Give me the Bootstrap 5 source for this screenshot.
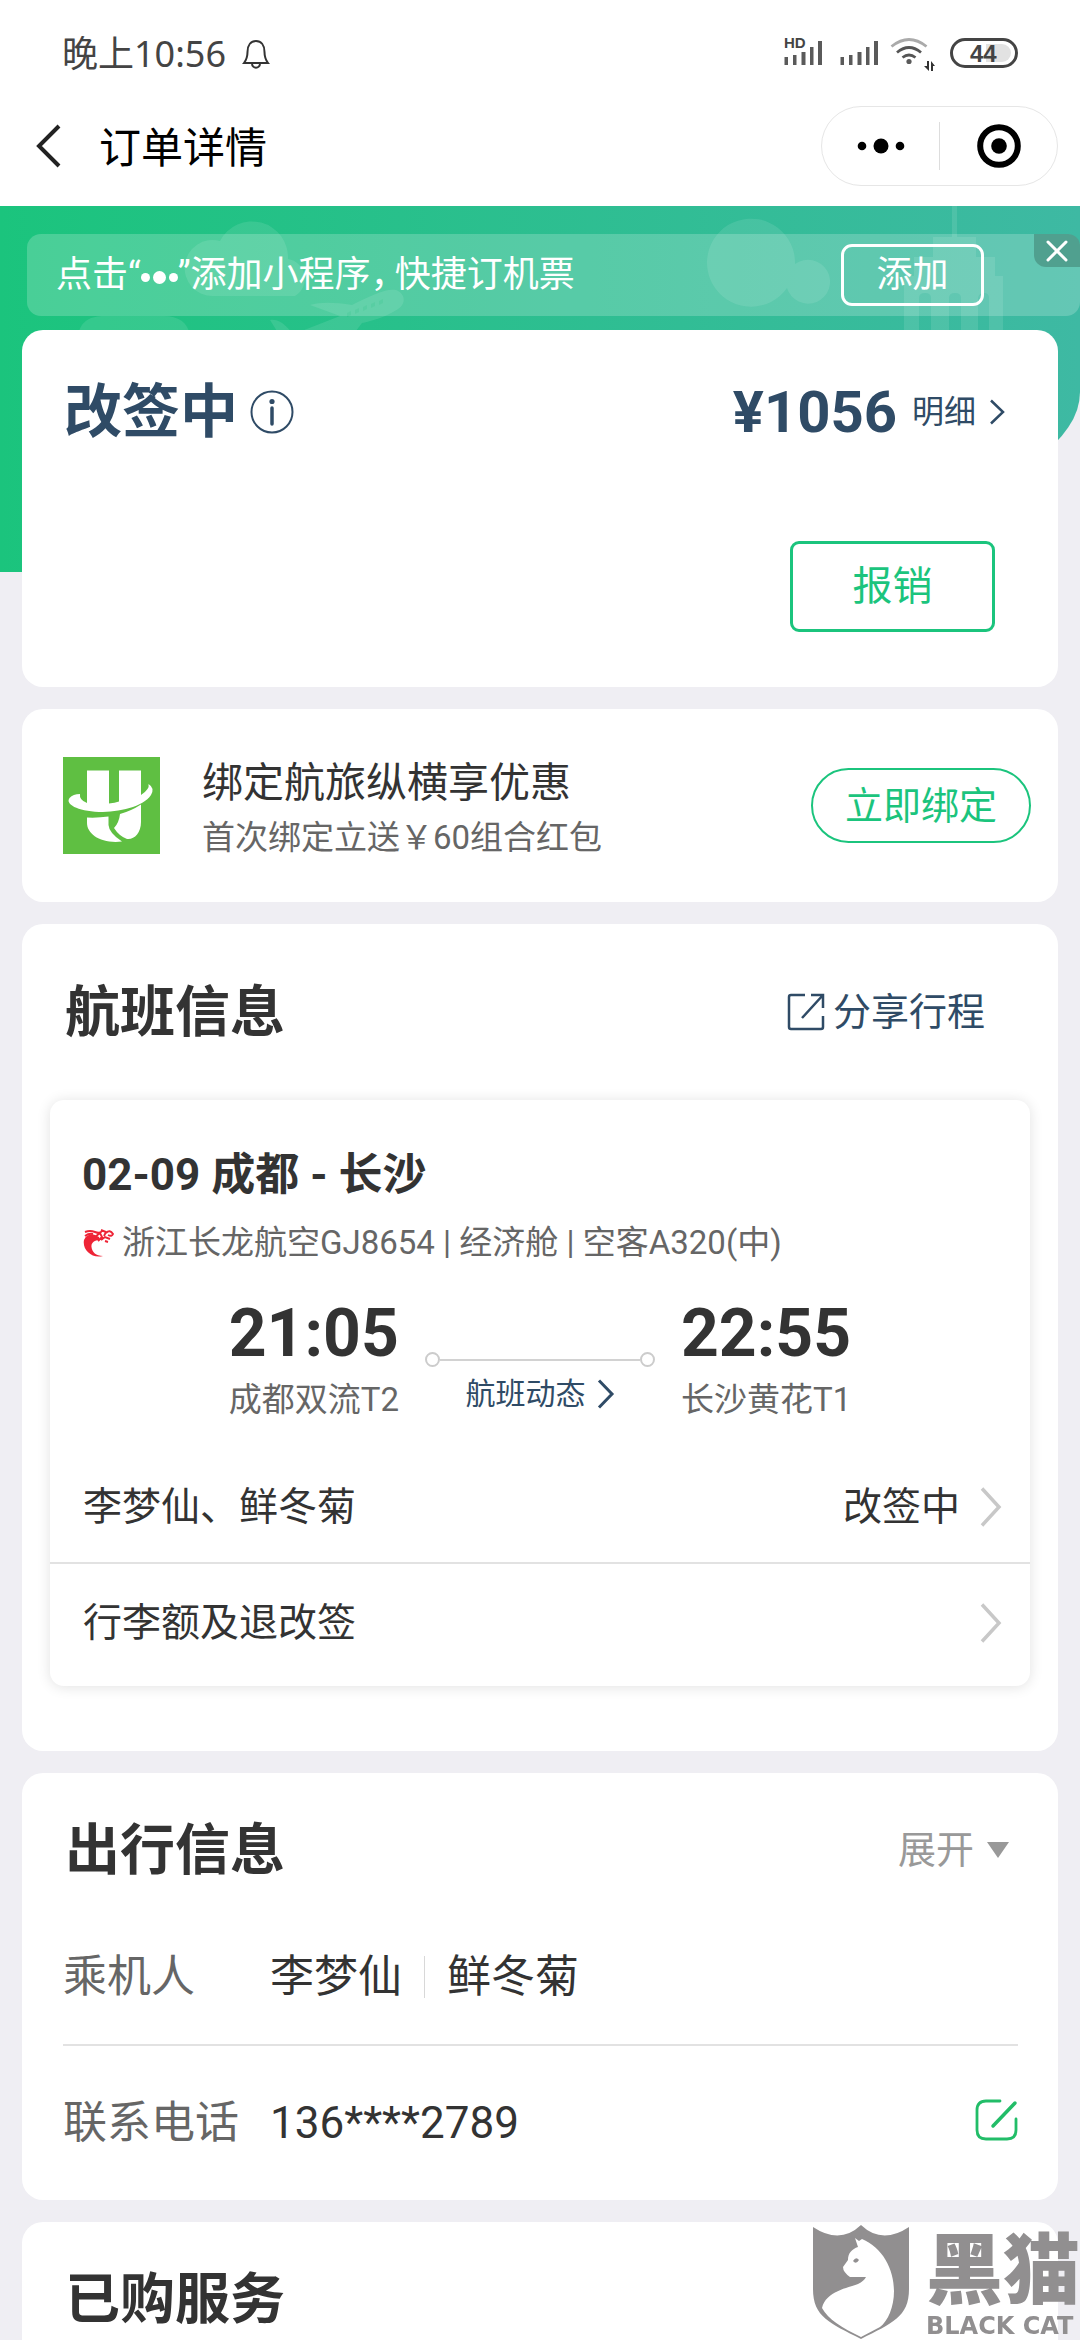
<!DOCTYPE html>
<html lang="zh-CN">
<head>
<meta charset="utf-8">
<meta name="viewport" content="width=device-width, initial-scale=1">
<title>订单详情</title>
<link href="https://cdn.jsdelivr.net/npm/bootstrap@5.3.0/dist/css/bootstrap.min.css" rel="stylesheet">
<style>
:root{--green:#1bc47d;--navy:#2f4b66;--ink:#333;--grey:#666;--soft:#999;--line:#e2e2e2}
body{background:#efeef3;color:var(--ink);font-family:Roboto,"Noto Sans CJK SC",sans-serif;overflow-x:hidden}
svg{display:block;flex:none}
.plain-btn{background:none;border:0;padding:0;color:inherit}
.statusbar{height:86px;padding:22px 62px 0;color:#444}
.clock{font:400 36px/50px "Noto Sans","Noto Sans CJK SC",sans-serif}
.titlebar{height:120px;padding:0 22px 0 34px}
.titlebar h1{font-size:42px;line-height:58px;color:#000;margin-left:37px;padding-top:6px}
.capsule{width:237px;height:80px;border:1px solid #e6e6e6;border-radius:40px}
.capsule .split{width:1px;height:48px;background:#ddd}
.capsule button{flex:1;display:flex;align-items:center;justify-content:center;height:78px}
.stage{position:relative;flex:1 0 auto}
.hero{position:absolute;inset:0 0 auto 0;height:366px;background:linear-gradient(90deg,#1bc47d,#3eb9a3);border-bottom-right-radius:600px 180px;overflow:hidden}
.content{position:relative;flex:1 0 auto}
.tip{position:relative;margin:28px 0 14px 27px;height:82px;padding:0 96px 0 29px;border-radius:14px;background:rgba(255,255,255,.2);color:#fff;font-size:36px;line-height:50px}
.tip .comma{font-feature-settings:"halt";margin-right:6px}
.tip .dots{display:inline-flex;gap:3px;align-items:center;vertical-align:middle}
.tip .dots i{width:9px;height:9px;border-radius:50%;background:#fff}
.tip .dots i:nth-child(2){width:13px;height:13px}
.tip .add-btn{width:143px;height:62px;border:3px solid #fff;border-radius:11px}
.tip .close-btn{position:absolute;top:0;right:0;width:46px;height:33px;background:#50a08f;border:0;padding:0;border-radius:0 12px 0 12px;display:flex;align-items:center;justify-content:center}
.panel{background:#fff;border-radius:21px;margin:0 22px 22px}
.panel h2{font-size:55px;line-height:70px;font-weight:700}
.navy{color:var(--navy)}
.state{height:162px;padding:2px 53px 0 42px}
.state .price{font-size:58px;line-height:70px;font-weight:700}
.state .state-name{font-size:58px}
.state .more{font-size:32px;line-height:44px;margin-left:15px;margin-right:13px}
.actions{padding:49px 63px 55px}
.claim-btn{width:205px;height:91px;border:3px solid var(--green);border-radius:9px;background:#fff;color:var(--green);font-size:40px;line-height:50px}
.bind{height:193px;padding:0 27px 0 41px}
.bind .copy{margin-left:42px;padding-top:11px}
.bind .t1{font-size:41px;line-height:54px}
.bind .t2{font-size:33px;line-height:56px;color:var(--grey)}
.bind-btn{width:220px;height:75px;border:2px solid var(--green);border-radius:38px;background:#fff;color:var(--green);font-size:38px;line-height:50px}
.flight-panel{padding-bottom:65px}
.flight-head{height:176px;padding:0 73px 0 43px}
.trip-head{height:152px;padding:2px 48px 0 43px}
.fs-38{font-size:38px;line-height:50px}
.fs-44{font-size:44px;line-height:60px}
.flight{margin:0 28px;border-radius:14px;box-shadow:0 1px 14px rgba(0,0,0,.12)}
.flight h3{font-size:44px;line-height:50px;font-weight:700;padding:50px 32px 22px}
.carrier{font-size:33px;line-height:42px;color:var(--grey);padding:0 33px;gap:8px}
.legs{gap:26px;padding-top:37px;padding-bottom:31px}
.legs .time{font-size:66px;line-height:66px;font-weight:700;margin-bottom:12px}
.legs .port{font-size:33px;line-height:42px;color:var(--grey)}
.legs .mid{width:230px;padding-top:51px}
.legs .mid a{font-size:30px;line-height:40px;margin-top:7px;gap:11px}
.track .ring{width:15px;height:15px;border:2px solid #ccc;border-radius:50%}
.track .bar{height:2px;background:#d2d2d2}
.flight-row{height:110px;padding:0 28px 0 33px;color:var(--ink);font-size:39px;line-height:50px;gap:20px}
.flight-row+.flight-row{height:124px;border-top:2px solid var(--line);padding-bottom:4px}
.trip-body{padding:0 40px 0 41px}
.info-row{height:154px}
.info-row.ruled{height:121px;padding-bottom:16px;border-bottom:2px solid var(--line)}
.info-row .key{width:207px;color:var(--grey)}
.info-row .pipe{width:1px;height:42px;background:#d8d8d8;margin:0 22px}
.info-row .edit{padding-bottom:6px}
.bought{padding:42px 43px 0}
.brandmark{position:fixed;right:0;bottom:0;color:#918f90;gap:16px}
.brandmark .cn{font:900 77px/72px "Noto Sans CJK SC",sans-serif}
.brandmark .en{font:700 24px/28px "DejaVu Sans",sans-serif;margin-top:11px}
</style>
</head>
<body>
<div class="d-flex flex-column min-vh-100">
<header class="bg-white">
  <div class="statusbar d-flex align-items-center justify-content-between">
    <div class="d-flex align-items-center">
      <span class="clock">晚上10:56</span>
      <svg class="ms-3" width="28" height="30" viewBox="0 0 28 30" fill="none" stroke="#333" stroke-width="2"><path d="M2 24H26C23 20 22.500 18 22.500 13C22.500 6 19 2 14 2S5.500 6 5.500 13C5.500 18 5 20 2 24ZM10 24.500C10 30 18 30 18 24.500"/></svg>
    </div>
    <svg width="236" height="40" viewBox="781 34 236 40" fill="#5a5a5a">
      <text x="783" y="48" font-family="Liberation Sans" font-weight="700" font-size="15" fill="#444">HD</text>
      <path id="sg" d="M783.500 57h3.500v8h-3.500zM792 55h3.500v10H792zM800.500 52h4v13h-4zM809 47h3.500v18H809zM817 41h4v24h-4z"/>
      <use href="#sg" x="56"/>
      <g fill="none" stroke="#555" stroke-width="2.800"><path stroke="#aaa" d="M890.500 46.500Q908 32.500 925.500 46.500"/><path d="M896 52.500Q908 42.500 920 52.500M901.500 57.500Q908 52.500 914.500 57.500"/></g>
      <circle cx="908" cy="61.500" r="2.600"/>
      <path d="M926 61h2v10l-5-5h3zM930 71V61l4 5h-2v5z" fill="#333"/>
      <path d="M985 44h16a9 9 0 0 1 0 18h-16z" fill="#e2e2e2"/>
      <rect x="950.500" y="39.500" width="65" height="27" rx="13.500" fill="none" stroke="#444" stroke-width="3"/>
      <text x="969" y="61.500" font-family="Liberation Sans" font-weight="700" font-size="24" fill="#444">44</text>
    </svg>
  </div>
  <nav class="titlebar d-flex align-items-center">
    <button class="plain-btn" aria-label="返回"><svg width="28" height="44" viewBox="0 0 28 44" fill="none" stroke="#222" stroke-width="4"><path d="M25 2L5 22L25 42"/></svg></button>
    <h1 class="mb-0 fw-normal flex-grow-1">订单详情</h1>
    <div class="capsule d-flex align-items-center">
      <button class="plain-btn" aria-label="更多"><svg width="48" height="18" viewBox="0 0 48 18"><circle cx="5" cy="9" r="4.300"/><circle cx="24" cy="9" r="7.500"/><circle cx="43" cy="9" r="4.300"/></svg></button>
      <span class="split"></span>
      <button class="plain-btn" aria-label="关闭"><svg width="44" height="44" viewBox="0 0 44 44"><circle cx="22" cy="22" r="18.800" fill="none" stroke="#000" stroke-width="6"/><circle cx="22" cy="22" r="7.800"/></svg></button>
    </div>
  </nav>
</header>
<div class="stage d-flex flex-column">
  <div class="hero" aria-hidden="true">
    <svg width="100%" viewBox="0 0 1080 366" fill="#fff" fill-opacity=".1">
      <path d="M213 90a28 28 0 1 1 7-55a36 36 0 0 1 68 18a20 20 0 0 1 7 37z"/>
      <path d="M78 130C80 114 92 110 104 110H164C178 110 188 116 190 130z"/>
      <path d="M270 114C282 112 288 124 294 128L340 110L310 99C320 96 334 96 352 99C370 90 386 82 396 84C406 88 406 98 398 103C386 111 372 115 362 117L352 130H280z"/>
      <path d="M787 82a44 44 0 1 1 8-24a22 22 0 1 1-8 24z"/>
      <path d="M952 0h5v31h19v20h19v19h8v60h-14V92q0-5-5-5t-6 5v38h-17V92q0-5-6-5t-6 5v38h-18V92q0-5-6-5t-6 5v38h-15V70h10V51h19V31h19z"/>
      <path d="M347 107l4-2v4l-4 2zM355 104l4-2v4l-4 2zM363 101l4-2v4l-4 2zM371 98l4-2v4l-4 2zM379 95l4-2v4l-4 2z" fill="#20bd80" fill-opacity=".45"/>
    </svg>
  </div>
  <main class="content d-flex flex-column">
    <div class="tip d-flex align-items-center justify-content-between">
      <div>点击“<span class="dots"><i></i><i></i><i></i></span>”添加小程序<span class="comma">，</span>快捷订机票</div>
      <button class="plain-btn add-btn">添加</button>
      <button class="close-btn" aria-label="关闭提示"><svg width="24" height="24" viewBox="0 0 24 24" stroke="#fff" stroke-width="3" stroke-linecap="round"><path d="M3 3L21 21M21 3L3 21"/></svg></button>
    </div>

    <section class="panel navy">
      <div class="state d-flex align-items-center justify-content-between">
        <div class="d-flex align-items-center">
          <h2 class="state-name mb-0">改签中</h2>
          <svg class="ms-2 me-2" width="52" height="44" viewBox="-4 0 52 44"><circle cx="22" cy="22" r="20.500" fill="none" stroke="#2f4b66" stroke-width="2"/><circle cx="22" cy="11.500" r="2.600" fill="#2f4b66"/><path d="M22 18V34" stroke="#2f4b66" stroke-width="3.500" stroke-linecap="round"/></svg>
        </div>
        <a href="#" class="navy text-decoration-none d-flex align-items-center">
          <span class="price">¥1056</span><span class="more">明细</span>
          <svg width="16" height="26" viewBox="0 0 16 26" fill="none" stroke="#2f4b66" stroke-width="2.500"><path d="M2 1.500L14 13L2 24.500"/></svg>
        </a>
      </div>
      <div class="actions d-flex justify-content-end"><button class="claim-btn">报销</button></div>
    </section>

    <section class="panel bind d-flex align-items-center">
      <svg width="97" height="97" viewBox="0 0 97 97"><path fill="#5fbf42" d="M0 0h97v97H0z"/><path fill="#fff" d="M24 13.500H46V46.500Q52 46 56 44.500V13.500H78V38Q87 32 85.500 27Q92 31 88 38C80 50 56 55 36 55C14 54 2 47 6.500 41Q10 37 17 37Q16 43 24 46z"/><path fill="#fff" d="M24 60.500Q35 61 45.500 59.500V68Q46 76 59 84.500C38 87 24 77 24 66zM57 57Q68 54 78 47.500V65C78 76 71 83 64 82Q56 79 51 71Q56 66 57 57z"/></svg>
      <div class="copy flex-grow-1">
        <div class="t1">绑定航旅纵横享优惠</div>
        <div class="t2">首次绑定立送￥60组合红包</div>
      </div>
      <button class="bind-btn">立即绑定</button>
    </section>

    <section class="panel flight-panel">
      <div class="flight-head d-flex align-items-center justify-content-between">
        <h2 class="mb-0">航班信息</h2>
        <a href="#" class="navy text-decoration-none d-flex align-items-center fs-38">
          <svg class="me-2" width="38" height="38" viewBox="0 0 38 38" fill="none" stroke="#2f4b66" stroke-width="2.500"><path d="M18 2H4Q2 2 2 4V34Q2 36 4 36H34Q36 36 36 34V23M24 2H36V15M36 2L15 25"/></svg>
          <span>分享行程</span>
        </a>
      </div>
      <article class="flight">
        <h3 class="mb-0">02-09 成都 - 长沙</h3>
        <div class="carrier d-flex align-items-center">
          <svg width="31" height="30" viewBox="0 0 31 30" fill="none" stroke="#ee2436"><path fill="#ee2436" stroke="none" d="M20 28C9 31-1 22 1 12C3 7 8 5 12 7L16 9L17 12C11 12 8 15 8.500 19C9 24 13 28 20 28z"/><path stroke-width="1.900" d="M2 4Q7 2 12 4T19 3M2 8Q6 5 10 6M12 9L17 5L19 9L15 13M18 2L23 4L21 8M23 5Q27 1 30 6Q29 9 25 7M18 12L22 9L27 11M22 13L25 14"/></svg>
          <span>浙江长龙航空GJ8654 | 经济舱 | 空客A320(中)</span>
        </div>
        <div class="legs d-flex justify-content-center">
          <div><div class="time">21:05</div><div class="port">成都双流T2</div></div>
          <div class="mid">
            <div class="track d-flex align-items-center"><span class="ring"></span><span class="bar flex-grow-1"></span><span class="ring"></span></div>
            <a href="#" class="navy text-decoration-none d-flex align-items-center justify-content-center">航班动态<svg width="18" height="30" viewBox="0 0 18 30" fill="none" stroke="#2f4b66" stroke-width="3"><path d="M2 1.500L15 15L2 28.500"/></svg></a>
          </div>
          <div><div class="time">22:55</div><div class="port">长沙黄花T1</div></div>
        </div>
        <a href="#" class="flight-row text-decoration-none d-flex align-items-center">
          <span class="flex-grow-1">李梦仙、鲜冬菊</span><span>改签中</span>
          <svg width="22" height="40" viewBox="0 0 22 40" fill="none" stroke="#c8c8c8" stroke-width="3.500"><path d="M2 1.500L19 20L2 38.500"/></svg>
        </a>
        <a href="#" class="flight-row text-decoration-none d-flex align-items-center">
          <span class="flex-grow-1">行李额及退改签</span>
          <svg width="22" height="40" viewBox="0 0 22 40" fill="none" stroke="#c8c8c8" stroke-width="3.500"><path d="M2 1.500L19 20L2 38.500"/></svg>
        </a>
      </article>
    </section>

    <section class="panel">
      <div class="trip-head d-flex align-items-center justify-content-between">
        <h2 class="mb-0">出行信息</h2>
        <button class="plain-btn d-flex align-items-center fs-38" style="color:#999">展开<svg class="ms-2" width="28" height="18" viewBox="-4 0 28 18"><path d="M1 1H23L12 17z" fill="#999"/></svg></button>
      </div>
      <div class="trip-body">
        <div class="info-row ruled d-flex align-items-center fs-44">
          <span class="key">乘机人</span><span>李梦仙</span><span class="pipe"></span><span>鲜冬菊</span>
        </div>
        <div class="info-row d-flex align-items-center fs-44">
          <span class="key">联系电话</span><span class="flex-grow-1">136****2789</span>
          <button class="plain-btn edit" aria-label="编辑"><svg width="43" height="43" viewBox="0 0 43 43" fill="none" stroke="#22bd68" stroke-width="2.800" stroke-linecap="round"><path d="M25 2H11Q2 2 2 11V31Q2 40 11 40H32Q41 40 41 31V20"/><path stroke-width="3.500" d="M40 4L18 27"/></svg></button>
        </div>
      </div>
    </section>

    <section class="panel bought mb-0 rounded-bottom-0 flex-grow-1">
      <h2 class="mb-0">已购服务</h2>
    </section>
  </main>
</div>
</div>
<div class="brandmark d-flex align-items-end">
  <svg width="98" height="115" viewBox="0 0 98 115"><path fill="#918f90" d="M1 2Q28 20 49 0Q70 20 97 2V64C97 92 80 98 49 114C18 98 1 92 1 64z"/><path fill="#fff" d="M43 13L47 16L50 14C70 22 82 44 82 66C82 82 76 96 68 102L49 112C30 103 16 94 10 83C14 66 36 63 46 59Q52 56 54 52H38Q31 47 31 42L36 35C36 28 40 24 46 22z"/><path fill="#918f90" d="M41 36q3-5 6-1q-3 5-6 1z"/></svg>
  <div><div class="cn">黑猫</div><div class="en">BLACK CAT</div></div>
</div>
<script src="https://cdn.jsdelivr.net/npm/bootstrap@5.3.0/dist/js/bootstrap.bundle.min.js"></script>
</body>
</html>
